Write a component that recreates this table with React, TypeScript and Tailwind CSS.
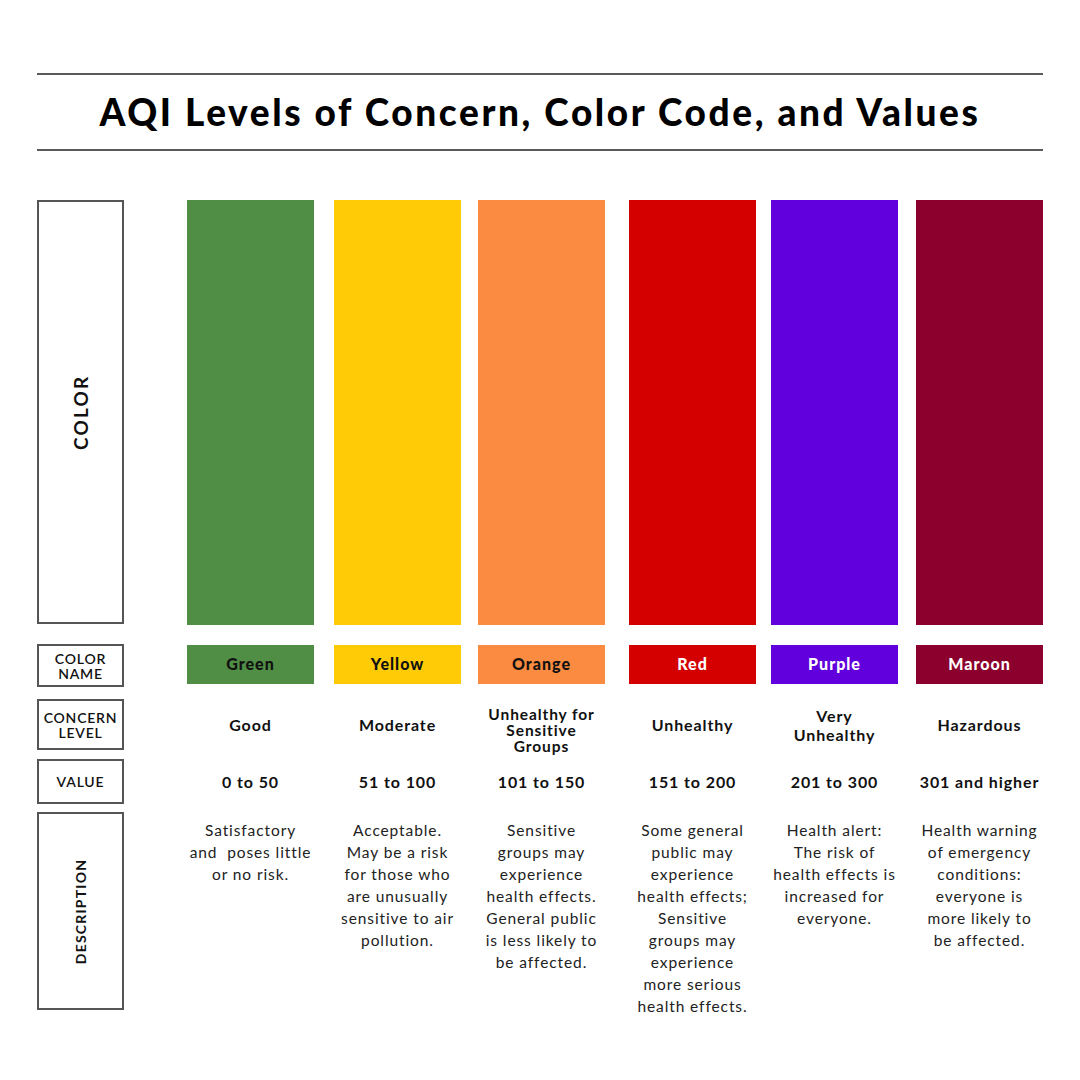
import React from "react";

type Col = {
  ml: string;
  bg: string;
  name: string;
  nameColor: string;
  concern: React.ReactNode;
  value: string;
  desc: string[];
};

const cols: Col[] = [
  {
    ml: "ml-[63px]",
    bg: "bg-[#508e45]",
    name: "Green",
    nameColor: "text-[#111]",
    concern: "Good",
    value: "0 to 50",
    desc: ["Satisfactory", "and\u00a0 poses little", "or no risk."],
  },
  {
    ml: "ml-[20px]",
    bg: "bg-[#fecb06]",
    name: "Yellow",
    nameColor: "text-[#111]",
    concern: "Moderate",
    value: "51 to 100",
    desc: ["Acceptable.", "May be a risk", "for those who", "are unusually", "sensitive to air", "pollution."],
  },
  {
    ml: "ml-[17px]",
    bg: "bg-[#fb8b40]",
    name: "Orange",
    nameColor: "text-[#111]",
    concern: (
      <span className="leading-[16px] block text-[15.5px] mt-[10px]">
        Unhealthy for
        <br />
        Sensitive
        <br />
        Groups
      </span>
    ),
    value: "101 to 150",
    desc: ["Sensitive", "groups may", "experience", "health effects.", "General public", "is less likely to", "be affected."],
  },
  {
    ml: "ml-[24px]",
    bg: "bg-[#d40000]",
    name: "Red",
    nameColor: "text-white",
    concern: "Unhealthy",
    value: "151 to 200",
    desc: ["Some general", "public may", "experience", "health effects;", "Sensitive", "groups may", "experience", "more serious", "health effects."],
  },
  {
    ml: "ml-[15px]",
    bg: "bg-[#6100dc]",
    name: "Purple",
    nameColor: "text-white",
    concern: (
      <span className="leading-[19px] block">
        Very
        <br />
        Unhealthy
      </span>
    ),
    value: "201 to 300",
    desc: ["Health alert:", "The risk of", "health effects is", "increased for", "everyone."],
  },
  {
    ml: "ml-[18px]",
    bg: "bg-[#8b002c]",
    name: "Maroon",
    nameColor: "text-white",
    concern: "Hazardous",
    value: "301 and higher",
    desc: ["Health warning", "of emergency", "conditions:", "everyone is", "more likely to", "be affected."],
  },
];

function LabelBox({ className, children }: { className: string; children: React.ReactNode }) {
  return (
    <div
      className={`w-[87px] shrink-0 border-2 border-[#555] flex items-center justify-center text-center text-[#111] ${className}`}
    >
      {children}
    </div>
  );
}

export default function App() {
  return (
    <div className="w-[1080px] h-[1080px] bg-white px-[37px] pt-[73px] font-['Lato','Open_Sans',sans-serif] text-[#111] overflow-hidden">
      <div className="h-[2px] bg-[#5a5a5a]" />
      <h1 className="h-[74px] flex items-center justify-center text-[37px] font-black tracking-[2.6px] text-black whitespace-nowrap">
        AQI Levels of Concern, Color Code, and Values
      </h1>
      <div className="h-[2px] bg-[#5a5a5a]" />

      {/* Color row */}
      <div className="mt-[49px] flex h-[425px]">
        <LabelBox className="h-[424px]">
          <span className="-rotate-90 whitespace-nowrap text-[19px] font-bold tracking-[2.2px]">COLOR</span>
        </LabelBox>
        {cols.map((c) => (
          <div key={c.name} className={`${c.ml} w-[127px] h-full ${c.bg}`} />
        ))}
      </div>

      {/* Color name row */}
      <div className="mt-[19px] flex items-start h-[43px]">
        <LabelBox className="h-[43px]">
          <span className="text-[14px] font-semibold leading-[15px] tracking-[0.8px]">
            COLOR
            <br />
            NAME
          </span>
        </LabelBox>
        {cols.map((c) => (
          <div
            key={c.name}
            className={`${c.ml} w-[127px] h-[39px] mt-px pb-[1px] ${c.bg} ${c.nameColor} flex items-center justify-center text-[16px] font-black tracking-[1px]`}
          >
            {c.name}
          </div>
        ))}
      </div>

      {/* Concern row */}
      <div className="mt-[12px] flex items-center h-[51px]">
        <LabelBox className="h-[51px]">
          <span className="text-[14px] font-semibold leading-[15px] tracking-[0.8px]">
            CONCERN
            <br />
            LEVEL
          </span>
        </LabelBox>
        {cols.map((c) => (
          <div
            key={c.name}
            className={`${c.ml} w-[127px] text-center text-[16px] font-bold tracking-[0.9px] whitespace-nowrap`}
          >
            {c.concern}
          </div>
        ))}
      </div>

      {/* Value row */}
      <div className="mt-[9px] flex items-center h-[45px]">
        <LabelBox className="h-[45px]">
          <span className="text-[14px] font-semibold tracking-[0.8px]">VALUE</span>
        </LabelBox>
        {cols.map((c) => (
          <div
            key={c.name}
            className={`${c.ml} w-[127px] text-center text-[16px] font-bold tracking-[0.9px] whitespace-nowrap`}
          >
            {c.value}
          </div>
        ))}
      </div>

      {/* Description row */}
      <div className="mt-[8px] flex items-start h-[198px]">
        <LabelBox className="h-[198px]">
          <span className="-rotate-90 whitespace-nowrap text-[14px] font-bold tracking-[1.2px]">DESCRIPTION</span>
        </LabelBox>
        {cols.map((c) => (
          <div
            key={c.name}
            className={`${c.ml} w-[127px] pt-[7px] text-center text-[15.5px] leading-[22px] tracking-[0.9px] text-[#222] whitespace-nowrap`}
          >
            {c.desc.map((l, i) => (
              <div key={i}>{l}</div>
            ))}
          </div>
        ))}
      </div>
    </div>
  );
}
